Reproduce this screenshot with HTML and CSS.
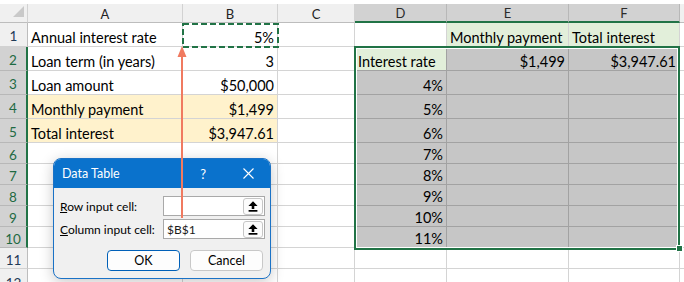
FILE: index.html
```html
<!DOCTYPE html>
<html>
<head>
<meta charset="utf-8">
<link rel="stylesheet" href="styles.css">
</head>
<body>
<div class="sheet">
  <div class="h corner"><svg width="12" height="12" viewBox="0 0 12 12"><polygon points="11,0 11,11 0,11" fill="#c9c9c9"/></svg></div>
  <div class="h">A</div><div class="h">B</div><div class="h">C</div>
  <div class="h hs">D</div><div class="h hs">E</div><div class="h hs">F</div><div class="h"></div>

  <div class="h rh">1</div>
  <div class="c">Annual interest rate</div><div class="c r">5%</div><div class="c"></div>
  <div class="c"></div><div class="c g">Monthly payment</div><div class="c g">Total interest</div><div class="c"></div>

  <div class="h rh rhs">2</div>
  <div class="c">Loan term (in years)</div><div class="c r">3</div><div class="c"></div>
  <div class="c g sb">Interest rate</div><div class="c s r">$1,499</div><div class="c s r">$3,947.61</div><div class="c"></div>

  <div class="h rh rhs">3</div>
  <div class="c">Loan amount</div><div class="c r">$50,000</div><div class="c"></div>
  <div class="c s r">4%</div><div class="c s"></div><div class="c s"></div><div class="c"></div>

  <div class="h rh rhs">4</div>
  <div class="c o">Monthly payment</div><div class="c o r">$1,499</div><div class="c"></div>
  <div class="c s r">5%</div><div class="c s"></div><div class="c s"></div><div class="c"></div>

  <div class="h rh rhs">5</div>
  <div class="c o">Total interest</div><div class="c o r">$3,947.61</div><div class="c"></div>
  <div class="c s r">6%</div><div class="c s"></div><div class="c s"></div><div class="c"></div>

  <div class="h rh rhs">6</div>
  <div class="c"></div><div class="c"></div><div class="c"></div>
  <div class="c s r">7%</div><div class="c s"></div><div class="c s"></div><div class="c"></div>

  <div class="h rh rhs">7</div>
  <div class="c"></div><div class="c"></div><div class="c"></div>
  <div class="c s r">8%</div><div class="c s"></div><div class="c s"></div><div class="c"></div>

  <div class="h rh rhs">8</div>
  <div class="c"></div><div class="c"></div><div class="c"></div>
  <div class="c s r">9%</div><div class="c s"></div><div class="c s"></div><div class="c"></div>

  <div class="h rh rhs">9</div>
  <div class="c"></div><div class="c"></div><div class="c"></div>
  <div class="c s r">10%</div><div class="c s"></div><div class="c s"></div><div class="c"></div>

  <div class="h rh rhs">10</div>
  <div class="c"></div><div class="c"></div><div class="c"></div>
  <div class="c s r">11%</div><div class="c s"></div><div class="c s"></div><div class="c"></div>

  <div class="h rh">11</div>
  <div class="c"></div><div class="c"></div><div class="c"></div>
  <div class="c"></div><div class="c"></div><div class="c"></div><div class="c"></div>

  <div class="h rh last">12</div>
  <div class="c"></div><div class="c"></div><div class="c"></div>
  <div class="c"></div><div class="c"></div><div class="c"></div><div class="c"></div>

  <svg class="marquee" width="97" height="25" viewBox="0 0 97 25">
    <rect x="1" y="1" width="95" height="23" fill="none" stroke="#217346" stroke-width="2" stroke-dasharray="6 3"/>
  </svg>

  <div class="selection"></div>
  <div class="handle"></div>

  <div class="dialog">
    <div class="titlebar">
      <span class="title">Data Table</span>
      <span class="help">?</span>
      <svg class="close" width="11" height="11" viewBox="0 0 11 11"><path d="M0.5 0.5 L10.5 10.5 M10.5 0.5 L0.5 10.5" stroke="#fff" stroke-width="1.1"/></svg>
    </div>
    <div class="dbody">
      <div class="field">
        <span class="label"><u>R</u>ow input cell:</span>
        <div class="input"><span class="val"></span>
          <span class="pick"><svg width="10" height="11" viewBox="0 0 10 11"><path d="M5 0.3 L9.6 5 L6.3 5 L6.3 8 L3.7 8 L3.7 5 L0.4 5 Z" fill="#000"/><rect x="0.6" y="9" width="8.8" height="1.7" fill="#000"/></svg></span>
        </div>
      </div>
      <div class="field">
        <span class="label"><u>C</u>olumn input cell:</span>
        <div class="input"><span class="val">$B$1</span>
          <span class="pick"><svg width="10" height="11" viewBox="0 0 10 11"><path d="M5 0.3 L9.6 5 L6.3 5 L6.3 8 L3.7 8 L3.7 5 L0.4 5 Z" fill="#000"/><rect x="0.6" y="9" width="8.8" height="1.7" fill="#000"/></svg></span>
        </div>
      </div>
      <div class="buttons">
        <span class="btn ok">OK</span>
        <span class="btn">Cancel</span>
      </div>
    </div>
  </div>

  <svg class="arrow" width="12" height="176" viewBox="0 0 12 176">
    <line x1="6" y1="12" x2="6" y2="174" stroke="#f07a60" stroke-width="2"/>
    <polygon points="6,2 1.5,13 10.5,13" fill="#f07a60"/>
  </svg>
</div>
</body>
</html>
```

FILE: styles.css
```css
html, body {
  margin: 0;
  background: #ffffff;
}

.sheet {
  position: relative;
  width: 684px;
  height: 282px;
  overflow: hidden;
  box-sizing: border-box;
  padding-top: 4px;
  display: grid;
  grid-template-columns: 28px 155px 95px 77px 92px 122px 111px 1fr;
  grid-template-rows: 19px repeat(5, 24px) repeat(7, 21px);
  font-family: Lato, "Liberation Sans", sans-serif;
}

.c {
  box-sizing: border-box;
  border-right: 1px solid #d4d4d4;
  border-bottom: 1px solid #d4d4d4;
  font-size: 14.5px;
  line-height: 16px;
  color: #000;
  display: flex;
  align-items: flex-end;
  padding: 0 3px 0 3px;
  white-space: nowrap;
  overflow: hidden;
}

.r { justify-content: flex-end; }
.o { background: #fff2cc; }
.g { background: #e2efda; }
.s { background: #c6c6c6; border-color: #a2a2a2; }
.sb { border-color: #a2a2a2; }

.h {
  box-sizing: border-box;
  background: #f0f0f0;
  border-right: 1px solid #d2d2d2;
  border-bottom: 1px solid #bdbdbd;
  display: flex;
  align-items: center;
  justify-content: center;
  font-size: 13px;
  color: #222;
  padding-top: 1px;
}

.corner {
  align-items: flex-end;
  justify-content: flex-end;
  padding: 0 2px 4px 0;
}

.hs {
  background: #d2d2d2;
  border-bottom: 2px solid #217346;
  border-right-color: #b8b8b8;
  color: #2b2b2b;
}

.rh {
  border-right: 1px solid #bdbdbd;
  border-bottom: 1px solid #d2d2d2;
  color: #1f3b57;
  padding-top: 3px;
  font-size: 13.5px;
}

.last {
  align-items: flex-start;
  padding-top: 6px;
}

.rhs {
  background: #d2d2d2;
  border-right: 2px solid #217346;
  border-bottom-color: #b8b8b8;
  color: #1e6a42;
}

.marquee {
  position: absolute;
  left: 182px;
  top: 23px;
}

.selection {
  position: absolute;
  left: 354px;
  top: 46px;
  width: 326px;
  height: 204px;
  box-sizing: border-box;
  border: 2px solid #217346;
  box-shadow: inset 0 0 0 1px #ffffff;
}

.handle {
  position: absolute;
  left: 676px;
  top: 245px;
  width: 7px;
  height: 7px;
  box-sizing: border-box;
  background: #217346;
  border: 1px solid #ffffff;
}

.dialog {
  position: absolute;
  left: 53px;
  top: 158px;
  width: 218px;
  height: 121px;
  box-sizing: border-box;
  border: 1px solid #1a72c6;
  border-radius: 8px;
  background: #f0f0f0;
  box-shadow: 0 3px 14px rgba(0, 0, 0, 0.22);
  overflow: hidden;
  font-family: Lato, "Liberation Sans", sans-serif;
  font-size: 12px;
  color: #000;
}

.titlebar {
  height: 29px;
  background: #0a72cc;
  color: #fff;
  display: flex;
  align-items: center;
  padding: 0 16px 0 8px;
}

.title {
  font-size: 12.5px;
  flex: 1;
}

.help {
  font-size: 13px;
  margin-right: 37px;
}

.close { display: block; }

.dbody {
  padding: 8px 5px 0 6px;
  display: flex;
  flex-direction: column;
  gap: 3px;
}

.field {
  display: flex;
  align-items: center;
  justify-content: space-between;
  height: 20px;
}

.label { font-size: 12px; }

.input {
  width: 102px;
  height: 20px;
  box-sizing: border-box;
  border: 1px solid #a9a9a9;
  background: #fff;
  display: flex;
  align-items: center;
  justify-content: space-between;
  padding: 0 1px 0 3px;
}

.val { font-size: 12px; color: #1b1b1b; }

.pick {
  width: 20px;
  height: 17px;
  box-sizing: border-box;
  border: 1px solid #c6c6c6;
  border-radius: 3px;
  background: #fcfcfc;
  display: flex;
  align-items: center;
  justify-content: center;
}

.pick svg { display: block; }

.buttons {
  display: flex;
  justify-content: flex-end;
  gap: 10px;
  margin-top: 8px;
  padding-right: 2px;
}

.btn {
  width: 73px;
  height: 21px;
  box-sizing: border-box;
  border: 1px solid #c8c8c8;
  border-radius: 4px;
  background: #fdfdfd;
  display: flex;
  align-items: center;
  justify-content: center;
  font-size: 12.5px;
}

.ok { border-color: #0060b8; }

.arrow {
  position: absolute;
  left: 176px;
  top: 44px;
}
```
